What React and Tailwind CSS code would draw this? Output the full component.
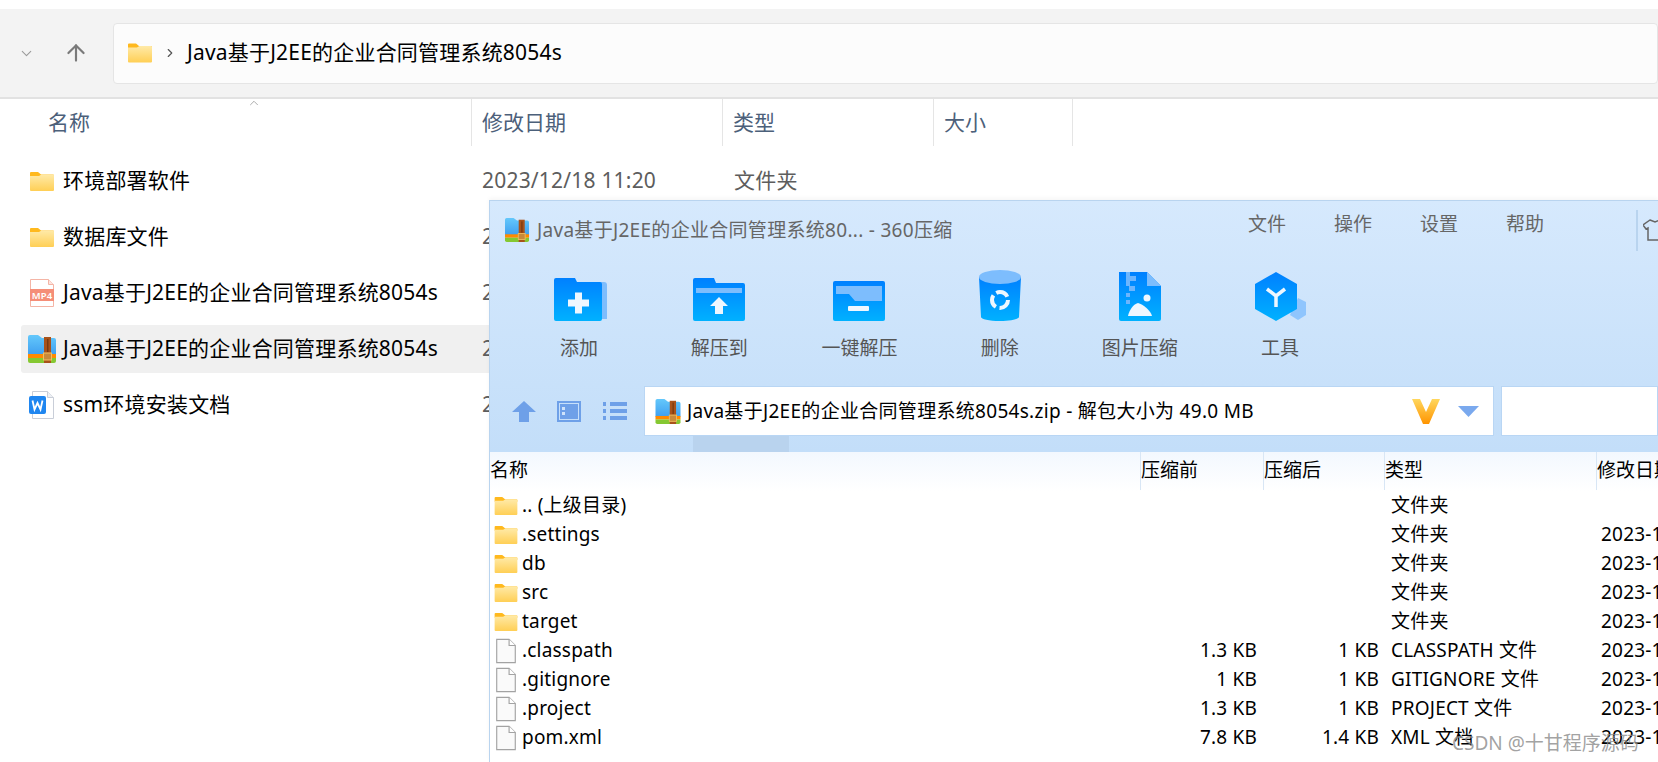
import { ChevronDown, ChevronRight, ChevronUp, ArrowUp } from "lucide-react";

const fontStack = "font-['Noto_Sans','Noto_Sans_CJK_SC',sans-serif]";

function FolderIcon({ className }) {
  return (
    <svg viewBox="0 0 24 19" className={className}>
      <defs>
        <linearGradient id="fold" x1="0" y1="0" x2="0" y2="1">
          <stop offset="0" stopColor="#ffeaa8" />
          <stop offset="1" stopColor="#ffcf55" />
        </linearGradient>
      </defs>
      <path d="M0 1a1 1 0 0 1 1-1h7l3 2.500h12a1 1 0 0 1 1 1V5H0z" fill="#ffb91e" />
      <path d="M0 4h9l2.500-1.500H23a1 1 0 0 1 1 1V18a1 1 0 0 1-1 1H1a1 1 0 0 1-1-1z" fill="url(#fold)" />
    </svg>
  );
}

function ZipIcon({ className }) {
  return (
    <svg viewBox="0 0 28 28" className={className}>
      <defs>
        <linearGradient id="zipblue" x1="0" y1="0" x2="0" y2="1">
          <stop offset="0" stopColor="#64c8fb" />
          <stop offset="1" stopColor="#3f9ff0" />
        </linearGradient>
      </defs>
      <path d="M0 2a2 2 0 0 1 2-2h8l4 3h12a2 2 0 0 1 2 2v15H0z" fill="url(#zipblue)" />
      <rect x="0" y="19" width="28" height="4" fill="#ff8a00" />
      <path d="M0 23h28v3a2 2 0 0 1-2 2H2a2 2 0 0 1-2-2z" fill="#85c832" />
      <rect x="16" y="2" width="7" height="26" fill="#a8521a" />
      <rect x="19" y="4" width="1.500" height="13" fill="#7a3a10" />
      <rect x="15.500" y="18" width="8" height="7" fill="#c98a3a" stroke="#f2c060" strokeWidth="1" />
    </svg>
  );
}

function Mp4Icon({ className }) {
  return (
    <svg viewBox="0 0 24 28" className={className}>
      <path d="M.5.5h18l5 5v22H.5z" fill="#fff" stroke="#f4b5a6" />
      <path d="M18.500.5v5h5" fill="#fde5df" stroke="#f4b5a6" />
      <rect x="0" y="10" width="24" height="12" fill="#f58e78" />
      <text x="12" y="20" textAnchor="middle" fontSize="9.500" fontWeight="600" fill="#fff" fontFamily="Noto Sans">MP4</text>
    </svg>
  );
}

function WordIcon({ className }) {
  return (
    <svg viewBox="0 0 25 28" className={className}>
      <path d="M3.500.5h15l6 6v21h-21z" fill="#fff" stroke="#c9ced8" />
      <path d="M18.500.5v6h6" fill="#eef0f4" stroke="#c9ced8" />
      <rect x="0" y="5" width="17" height="18" rx="2" fill="#1f86f0" />
      <path d="M3.500 9.500l2 9 3-6.500 3 6.500 2-9" fill="none" stroke="#fff" strokeWidth="1.800" />
    </svg>
  );
}

function PageIcon({ className }) {
  return (
    <svg viewBox="0 0 21 26" className={className}>
      <path d="M.75.75h13l6.500 6.500v18H.75z" fill="#fafafa" stroke="#a3a3a3" strokeWidth="1.200" />
      <path d="M13.750.75v6.500h6.500" fill="#fff" stroke="#a3a3a3" strokeWidth="1.200" />
    </svg>
  );
}

function BlueGrad({ id }) {
  return (
    <defs>
      <linearGradient id={id} x1="0" y1="0" x2="0" y2="1">
        <stop offset="0" stopColor="#0080ff" />
        <stop offset="1" stopColor="#00b1ff" />
      </linearGradient>
    </defs>
  );
}

function AddIcon() {
  return (
    <svg viewBox="0 0 54 43" className="ml-1 w-[54px] h-[43px]">
      <BlueGrad id="add" />
      <path d="M16 4h34a3 3 0 0 1 3 3v34h-6z" fill="#7dbdfd" />
      <path d="M0 2a2 2 0 0 1 2-2h19l2 4h23a2 2 0 0 1 2 2v35a2 2 0 0 1-2 2H2a2 2 0 0 1-2-2z" fill="url(#add)" />
      <path d="M21 18h7v7h7v7h-7v7h-7v-7h-7v-7h7z" transform="translate(0 -3.500)" fill="#eef7ff" />
    </svg>
  );
}

function ExtractIcon() {
  return (
    <svg viewBox="0 0 52 43" className="w-[52px] h-[43px]">
      <BlueGrad id="ext" />
      <path d="M0 2a2 2 0 0 1 2-2h19l2 5h27a2 2 0 0 1 2 2v34a2 2 0 0 1-2 2H2a2 2 0 0 1-2-2z" fill="url(#ext)" />
      <rect x="3" y="10" width="46" height="5" fill="#7dbdfd" />
      <path d="M26 19l9 9h-5v8h-8v-8h-5z" fill="#eef7ff" />
    </svg>
  );
}

function OneKeyIcon() {
  return (
    <svg viewBox="0 0 52 40" className="w-[52px] h-[40px]">
      <BlueGrad id="one" />
      <rect width="52" height="40" rx="2" fill="url(#one)" />
      <path d="M3 5h46v15H22l-6-7H3z" fill="#7dbdfd" />
      <rect x="15" y="25" width="21" height="5" rx="1" fill="#eef7ff" />
    </svg>
  );
}

function TrashIcon() {
  return (
    <svg viewBox="0 0 42 51" className="w-[42px] h-[51px]">
      <BlueGrad id="trash" />
      <path d="M0 7h42l-2 40c0 2-8 4-19 4S2 49 2 47z" fill="url(#trash)" />
      <ellipse cx="21" cy="7" rx="21" ry="7" fill="#7dbdfd" />
      <circle cx="21" cy="30" r="8" fill="none" stroke="#eef7ff" strokeWidth="4" strokeDasharray="13 3.800" />
    </svg>
  );
}

function ImageZipIcon() {
  return (
    <svg viewBox="0 0 42 49" className="w-[42px] h-[49px]">
      <BlueGrad id="img" />
      <path d="M0 0h28l14 14v33a2 2 0 0 1-2 2H2a2 2 0 0 1-2-2z" fill="url(#img)" />
      <path d="M28 0l14 14H28z" fill="#7dbdfd" />
      <path d="M7 0h4v4h6v5h-6v5H7zM10 14h6v5h-6zM7 21h4v4H7zM7 28h4v4H7z" fill="#6db5fd" />
      <circle cx="28" cy="26" r="3.500" fill="#eef7ff" />
      <path d="M9 44c1-5 5-12 10-13 5 1 13 8 14 13z" fill="#eef7ff" />
    </svg>
  );
}

function ToolIcon() {
  return (
    <svg viewBox="0 0 51 49" className="w-[51px] h-[49px]">
      <BlueGrad id="tool" />
      <path d="M43 26l8 4v13l-8 5-8-5z" fill="#8fc5fd" />
      <path d="M21 0l21 12v25L21 49 0 37V12z" fill="url(#tool)" />
      <path d="M12 17l9 7 9-7M21 24v11" fill="none" stroke="#eef7ff" strokeWidth="3.500" />
    </svg>
  );
}

const toolbar = [
  { icon: <AddIcon />, label: "添加" },
  { icon: <ExtractIcon />, label: "解压到" },
  { icon: <OneKeyIcon />, label: "一键解压" },
  { icon: <TrashIcon />, label: "删除" },
  { icon: <ImageZipIcon />, label: "图片压缩" },
  { icon: <ToolIcon />, label: "工具" },
];

const explorerRows = [
  { icon: <FolderIcon className="w-6 h-[19px]" />, name: "环境部署软件", date: "2023/12/18 11:20", type: "文件夹" },
  { icon: <FolderIcon className="w-6 h-[19px]" />, name: "数据库文件", date: "2023/12/18 11:20", type: "文件夹" },
  { icon: <Mp4Icon className="w-6 h-7" />, name: "Java基于J2EE的企业合同管理系统8054s", date: "2023/12/18 11:20", type: "MP4 文件" },
  { icon: <ZipIcon className="w-7 h-7" />, name: "Java基于J2EE的企业合同管理系统8054s", date: "2023/12/18 11:20", type: "ZIP 文件", selected: true },
  { icon: <WordIcon className="w-[25px] h-7" />, name: "ssm环境安装文档", date: "2023/12/18 11:20", type: "DOCX 文档" },
];

const zipRows = [
  { folder: true, name: ".. (上级目录)", type: "文件夹" },
  { folder: true, name: ".settings", type: "文件夹", date: "2023-12-18" },
  { folder: true, name: "db", type: "文件夹", date: "2023-12-18" },
  { folder: true, name: "src", type: "文件夹", date: "2023-12-18" },
  { folder: true, name: "target", type: "文件夹", date: "2023-12-18" },
  { name: ".classpath", before: "1.3 KB", after: "1 KB", type: "CLASSPATH 文件", date: "2023-12-18" },
  { name: ".gitignore", before: "1 KB", after: "1 KB", type: "GITIGNORE 文件", date: "2023-12-18" },
  { name: ".project", before: "1.3 KB", after: "1 KB", type: "PROJECT 文件", date: "2023-12-18" },
  { name: "pom.xml", before: "7.8 KB", after: "1.4 KB", type: "XML 文档", date: "2023-12-18" },
];

const zipCols = "grid grid-cols-[650px_123px_121px_212px_200px]";

function ZipWindow() {
  return (
    <div className="absolute left-[489px] top-[200px] right-0 bottom-0 overflow-hidden flex flex-col border-l border-t border-[#b9d4ef] shadow-[0_-2px_4px_rgba(0,0,0,0.04)]">
      <div className="bg-gradient-to-b from-[#d6e9fd] to-[#c3def9]">
        {/* title bar */}
        <div className="h-[58px] flex items-center">
          <div className="w-[758px] pl-[13px] flex items-center gap-[6px] shrink-0">
            <ZipIcon className="w-7 h-[24px]" />
            <span className="text-[19px] tracking-[0.3px] text-[#666] whitespace-nowrap">Java基于J2EE的企业合同管理系统80... - 360压缩</span>
          </div>
          <div className="mb-[11px] flex gap-[48px] text-[19px] text-[#666] shrink-0">
            <span>文件</span>
            <span>操作</span>
            <span>设置</span>
            <span>帮助</span>
          </div>
          <div className="ml-[92px] w-[2px] h-[41px] bg-[#b9d4ef] shrink-0" />
          <svg viewBox="0 0 24 22" className="ml-[5px] w-6 h-[22px] shrink-0" fill="none" stroke="#666" strokeWidth="1.500">
            <path d="M7 1l5 2 5-2 6 5-3 4-2-1v12H5V9l-2 1-3-4z" />
          </svg>
        </div>

        {/* toolbar */}
        <div className="flex pl-[19px] pt-[12px]">
          {toolbar.map((item) => (
            <div key={item.label} className="w-[140.2px] shrink-0 flex flex-col items-center">
              <div className="h-[51px] flex items-end justify-center pb-[1px]">{item.icon}</div>
              <span className="mt-[13px] text-[19px] leading-[26px] text-[#555]">{item.label}</span>
            </div>
          ))}
        </div>

        {/* path bar */}
        <div className="mt-[25px] h-[50px] flex items-center">
          <div className="w-[154px] pl-[22px] flex items-center shrink-0">
            <svg viewBox="0 0 24 21" className="w-6 h-[21px]" fill="#6ea0e8">
              <path d="M12 0l12 11h-7v10H7V11H0z" />
            </svg>
            <svg viewBox="0 0 24 21" className="ml-[21px] w-6 h-[21px]">
              <rect x="1" y="1" width="22" height="19" fill="none" stroke="#6ea0e8" strokeWidth="2" />
              <rect x="3" y="3" width="18" height="15" fill="#6ea0e8" />
              <rect x="5" y="6" width="3" height="3" fill="#cfe3fb" />
              <rect x="5" y="11" width="3" height="3" fill="#cfe3fb" />
            </svg>
            <svg viewBox="0 0 24 18" className="ml-[22px] w-6 h-[18px]" fill="#6ea0e8">
              <rect x="0" y="0" width="3" height="4" />
              <rect x="7" y="0" width="17" height="4" />
              <rect x="0" y="7" width="3" height="4" />
              <rect x="7" y="7" width="17" height="4" />
              <rect x="0" y="14" width="3" height="4" />
              <rect x="7" y="14" width="17" height="4" />
            </svg>
          </div>
          <div className="w-[850px] h-full bg-white flex items-center pl-[9px] pr-[14px] shrink-0 border border-[#b9d6f4]">
            <ZipIcon className="w-7 h-[25px]" />
            <span className="ml-[5px] text-[19px] tracking-[0.3px] text-black whitespace-nowrap">Java基于J2EE的企业合同管理系统8054s.zip - 解包大小为 49.0 MB</span>
            <svg viewBox="0 0 28 25" className="ml-auto w-7 h-[25px]">
              <defs>
                <linearGradient id="vlogo" x1="0" y1="0" x2="0" y2="1">
                  <stop offset="0" stopColor="#ffd75e" />
                  <stop offset="1" stopColor="#ff9400" />
                </linearGradient>
              </defs>
              <path d="M0 0h8l6 13 6-13h8L17 25h-6z" fill="url(#vlogo)" />
            </svg>
            <svg viewBox="0 0 21 11" className="ml-[18px] w-[21px] h-[11px]" fill="#7aa9ee">
              <path d="M0 0h21L10.500 11z" />
            </svg>
          </div>
          <div className="ml-[7px] flex-1 h-full bg-white border border-[#b9d6f4]" />
        </div>

        <div className="h-4">
          <div className="ml-[203px] w-[96px] h-full bg-[#b9d3ee]" />
        </div>
      </div>

      {/* file list */}
      <div className="flex-1 bg-white">
        <div className="h-[39px] bg-gradient-to-b from-[#f3f8fe] to-white">
          <div className={`${zipCols} h-[38px] text-[19px] leading-[37px] text-black whitespace-nowrap`}>
            <span>名称</span>
            <span className="border-l border-[#d8e6f5]">压缩前</span>
            <span className="border-l border-[#d8e6f5]">压缩后</span>
            <span className="border-l border-[#d8e6f5]">类型</span>
            <span className="border-l border-[#d8e6f5]">修改日期</span>
          </div>
        </div>
        {zipRows.map((row) => (
          <div key={row.name} className={`${zipCols} h-[29px] items-center text-[19px] tracking-[0.2px] text-black whitespace-nowrap`}>
            <div className="flex items-center">
              {row.folder ? (
                <FolderIcon className="ml-[4px] w-6 h-[18px]" />
              ) : (
                <PageIcon className="ml-[6px] mr-[2px] w-[20px] h-[26px]" />
              )}
              <span className="ml-[4px]">{row.name}</span>
            </div>
            <span className="text-right pr-[6px]">{row.before}</span>
            <span className="text-right pr-[5px]">{row.after}</span>
            <span className="pl-[7px]">{row.type}</span>
            <span className="pl-[5px]">{row.date}</span>
          </div>
        ))}
      </div>
    </div>
  );
}

export default function App() {
  return (
    <div className={`relative w-[1658px] h-[762px] overflow-hidden bg-white ${fontStack}`}>
      {/* explorer address bar */}
      <div className="mt-[9px] h-[90px] bg-[#f3f3f3] border-b-2 border-[#e2e2e2] flex items-center">
        <ChevronDown className="ml-[18px] w-[17px] h-[17px] text-[#9a9a9a]" strokeWidth={1.5} />
        <ArrowUp className="ml-[28px] w-[26px] h-[26px] text-[#7a7a7a]" strokeWidth={2} />
        <div className="ml-[24px] flex-1 h-[61px] bg-[#fcfcfc] border border-[#e5e5e5] rounded-[4px] flex items-center pl-[14px]">
          <FolderIcon className="w-6 h-[20px]" />
          <ChevronRight className="ml-[11px] w-[14px] h-[14px] text-[#555]" strokeWidth={2} />
          <span className="ml-[10px] text-[21px] tracking-[0.2px] text-black whitespace-nowrap">Java基于J2EE的企业合同管理系统8054s</span>
        </div>
      </div>

      {/* column headers */}
      <div className="relative h-[47px] grid grid-cols-[471px_251px_211px_139px_1fr] text-[21px] text-[#4c607a]">
        <div className="pl-[48px] pt-[8px]">名称</div>
        <div className="pl-[10px] pt-[8px] border-l border-[#e5e5e5]">修改日期</div>
        <div className="pl-[10px] pt-[8px] border-l border-[#e5e5e5]">类型</div>
        <div className="pl-[10px] pt-[8px] border-l border-[#e5e5e5]">大小</div>
        <div className="border-l border-[#e5e5e5]" />
        <ChevronUp className="absolute left-[246px] top-[-3px] w-4 h-[14px] text-[#8a8a8a]" strokeWidth={1.2} />
      </div>

      {/* explorer rows */}
      <div className="mt-[11px] ml-[21px] w-[1000px] flex flex-col gap-2">
        {explorerRows.map((row, i) => (
          <div
            key={i}
            className={`h-[48px] rounded-[3px] grid grid-cols-[461px_252px_1fr] items-center text-[21px] tracking-[0.2px] ${row.selected ? "bg-[#f0f0f0]" : ""}`}
          >
            <div className="flex items-center">
              <div className="w-[42px] flex justify-center pr-[1px]">{row.icon}</div>
              <span className="text-black whitespace-nowrap">{row.name}</span>
            </div>
            <span className="text-[#5d5d5d]">{row.date}</span>
            <span className="text-[#5d5d5d]">{row.type}</span>
          </div>
        ))}
      </div>

      <ZipWindow />

      {/* watermark */}
      <div className="absolute left-[1452px] top-[730px] text-[19px] leading-[26px] text-[#8a8a8a]/80 whitespace-nowrap">
        CSDN @十甘程序源码
      </div>
    </div>
  );
}
